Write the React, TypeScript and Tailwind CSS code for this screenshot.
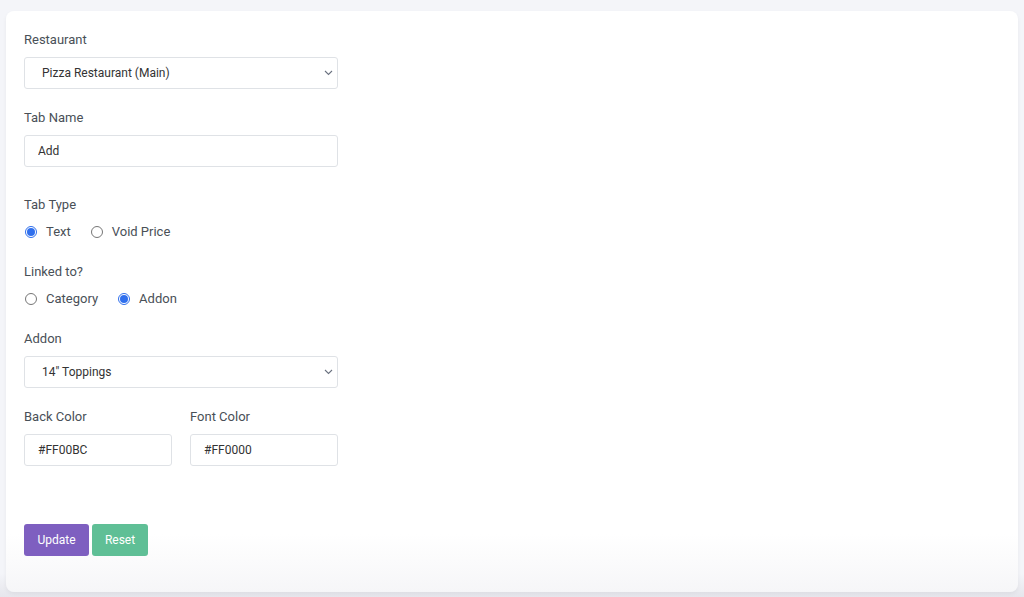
import { useState } from 'react'

const font = { fontFamily: 'Roboto, "Liberation Sans", sans-serif' }

function Chevron() {
  return (
    <svg className="pointer-events-none absolute right-[5px] top-1/2 -translate-y-1/2" width="9" height="6" viewBox="0 0 9 6" fill="none">
      <path d="M1 1l3.5 3.5L8 1" stroke="#6b7280" strokeWidth="1.1" />
    </svg>
  )
}

function Select({ value, options }: { value: string; options: string[] }) {
  return (
    <div className="relative w-[314px]">
      <select
        defaultValue={value}
        className="h-[32px] w-full appearance-none rounded-[3px] border border-[#dfe2e6] bg-white pl-[17px] text-[12px] text-[#333] outline-none"
      >
        {options.map((o) => (
          <option key={o}>{o}</option>
        ))}
      </select>
      <Chevron />
    </div>
  )
}

function TextInput({ value, width }: { value: string; width: string }) {
  return (
    <input
      defaultValue={value}
      className={`h-[32px] ${width} rounded-[3px] border border-[#dfe2e6] bg-white px-[13px] text-[12px] text-[#333] outline-none`}
    />
  )
}

function Radio({ checked, label, onClick }: { checked: boolean; label: string; onClick: () => void }) {
  return (
    <label className="flex cursor-pointer items-center" onClick={onClick}>
      <span
        className={`mr-[9px] flex h-[12px] w-[12px] items-center justify-center rounded-full border ${
          checked ? 'border-[#2f6fed] bg-white' : 'border-[#767676] bg-white'
        }`}
      >
        {checked && <span className="h-[8px] w-[8px] rounded-full bg-[#2f6fed]" />}
      </span>
      <span className="text-[13px] leading-[20px] text-[#495057]">{label}</span>
    </label>
  )
}

function Label({ children }: { children: string }) {
  return <div className="mb-[8px] text-[13px] leading-[19px] text-[#495057]">{children}</div>
}

export default function App() {
  const [tabType, setTabType] = useState('text')
  const [linked, setLinked] = useState('addon')

  return (
    <div className="h-[597px] overflow-hidden bg-[linear-gradient(to_bottom,#f4f5f9_96%,#e6e6ec)] px-[6px] pt-[11px]" style={font}>
      <div className="h-[581px] rounded-[8px] bg-[linear-gradient(to_bottom,#ffffff_90%,#f6f6f8)] px-[18px] pt-[19px] shadow-[0_2px_4px_rgba(0,0,0,0.05)]">
        <Label>Restaurant</Label>
        <Select value="Pizza Restaurant (Main)" options={['Pizza Restaurant (Main)']} />

        <div className="mt-[19px]">
          <Label>Tab Name</Label>
          <TextInput value="Add" width="w-[314px]" />
        </div>

        <div className="mt-[28px]">
          <Label>Tab Type</Label>
          <div className="flex gap-[20px] pl-[1px]">
            <Radio checked={tabType === 'text'} label="Text" onClick={() => setTabType('text')} />
            <Radio checked={tabType === 'void'} label="Void Price" onClick={() => setTabType('void')} />
          </div>
        </div>

        <div className="mt-[20px]">
          <Label>Linked to?</Label>
          <div className="flex gap-[20px] pl-[1px]">
            <Radio checked={linked === 'category'} label="Category" onClick={() => setLinked('category')} />
            <Radio checked={linked === 'addon'} label="Addon" onClick={() => setLinked('addon')} />
          </div>
        </div>

        <div className="mt-[20px]">
          <Label>Addon</Label>
          <Select value={'14" Toppings'} options={['14" Toppings']} />
        </div>

        <div className="mt-[19px] flex gap-[18px]">
          <div>
            <Label>Back Color</Label>
            <TextInput value="#FF00BC" width="w-[148px]" />
          </div>
          <div>
            <Label>Font Color</Label>
            <TextInput value="#FF0000" width="w-[148px]" />
          </div>
        </div>

        <div className="mt-[58px] flex gap-[3px]">
          <button className="h-[32px] w-[65px] rounded-[3px] bg-[#7e5fc0] text-[12px] text-white">Update</button>
          <button className="h-[32px] w-[56px] rounded-[3px] bg-[#5fbf96] text-[12px] text-white">Reset</button>
        </div>
      </div>
    </div>
  )
}
